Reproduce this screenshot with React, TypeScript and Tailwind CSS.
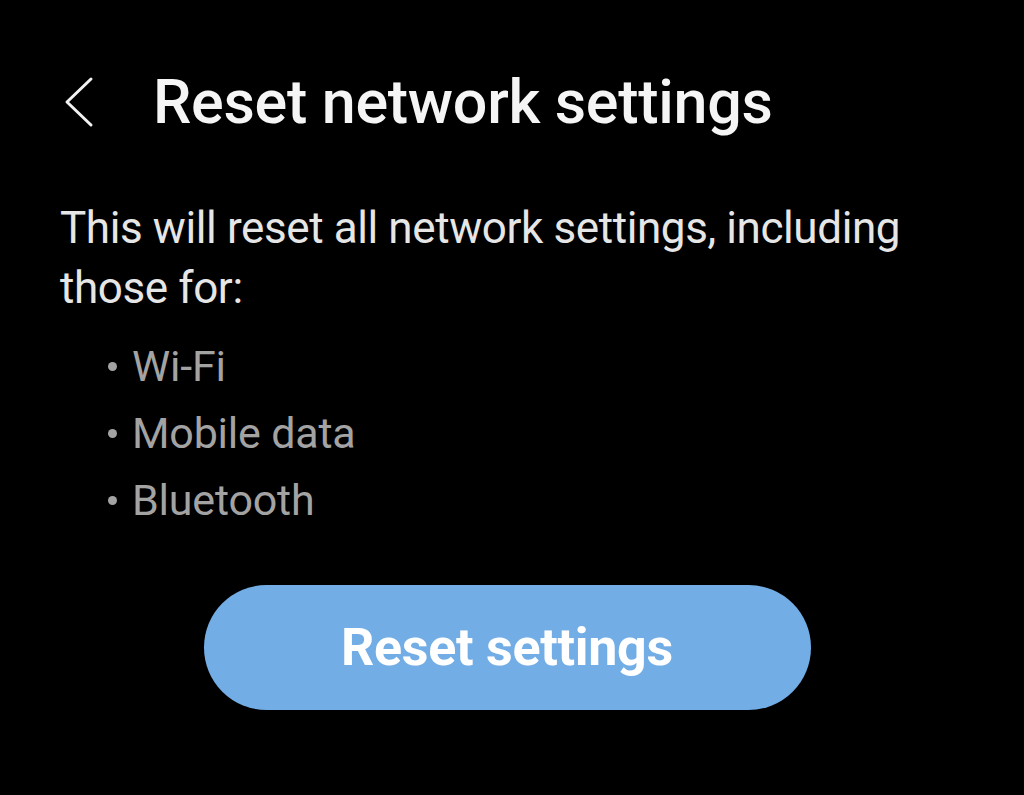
import React from "react";

export default function App() {
  return (
    <div className="w-[1024px] h-[795px] bg-black overflow-hidden" style={{ fontFamily: "Roboto, 'Noto Sans', sans-serif" }}>
      <div className="flex items-center h-[72px] mt-[66px] pl-[62px]">
        <svg width="34" height="52" viewBox="0 0 34 52" className="shrink-0">
          <polyline points="29,3 5,26 29,49" fill="none" stroke="#f2f2f2" strokeWidth="3" strokeLinecap="round" strokeLinejoin="round" />
        </svg>
        <h1 className="ml-[57px] text-[61px] leading-[72px] font-medium text-[#f5f5f5] tracking-[-0.3px] whitespace-nowrap">Reset network settings</h1>
      </div>
      <p className="mt-[60px] pl-[60px] pr-[60px] text-[44px] leading-[60px] text-[#e6e6e6] tracking-[-0.4px]">
        This will reset all network settings, including those for:
      </p>
      <ul className="mt-[15px] pl-[108px] flex flex-col">
        {["Wi-Fi", "Mobile data", "Bluetooth"].map((t) => (
          <li key={t} className="flex items-center h-[67px] text-[43px] leading-[67px] text-[#a3a3a3] tracking-[-0.2px]">
            <span className="w-[9px] h-[9px] rounded-full bg-[#a3a3a3] mr-[15px] shrink-0" />
            {t}
          </li>
        ))}
      </ul>
      <div className="flex justify-center mt-[51px] pr-[10px]">
        <button className="w-[607px] h-[125px] rounded-full bg-[#72ade5] text-white text-[52px] font-bold tracking-[-0.3px]">
          Reset settings
        </button>
      </div>
    </div>
  );
}
